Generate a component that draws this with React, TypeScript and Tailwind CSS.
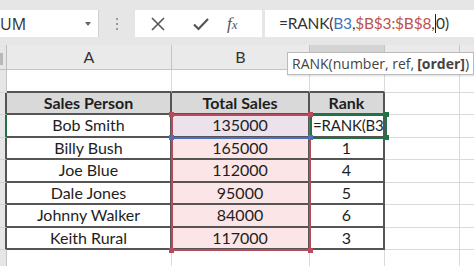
import React from "react";

const data: [string, string, string][] = [
  ["Bob Smith", "135000", ""],
  ["Billy Bush", "165000", "1"],
  ["Joe Blue", "112000", "4"],
  ["Dale Jones", "95000", "5"],
  ["Johnny Walker", "84000", "6"],
  ["Keith Rural", "117000", "3"],
];

const cellFont = { fontFamily: "Lato, 'Open Sans', sans-serif" };

function Sq({ className }: { className: string }) {
  return <div className={"absolute w-[5px] h-[5px] " + className} />;
}

export default function App() {
  const rowsIdx = [1, 2, 3, 4, 5, 6, 7, 8, 9];
  return (
    <div className="w-[474px] h-[266px] overflow-hidden bg-white flex flex-col" style={cellFont}>
      {/* toolbar */}
      <div className="h-[45px] shrink-0 bg-[#e6e6e6] flex items-start pt-[10px]">
        <div className="w-[99px] h-[27px] bg-white border-r border-[#d0d0d0] flex items-center justify-between pr-[7px] overflow-hidden">
          <span className="text-[16px] text-[#333] leading-none" style={{ fontFamily: "'Open Sans', sans-serif" }}>UM</span>
          <div className="w-0 h-0 border-l-[3px] border-r-[3px] border-t-[4px] border-l-transparent border-r-transparent border-t-[#666]" />
        </div>
        <div className="w-[36px] h-[27px] flex flex-col items-center justify-center gap-[3px]">
          <div className="w-[2px] h-[2px] bg-[#9a9a9a]" />
          <div className="w-[2px] h-[2px] bg-[#9a9a9a]" />
          <div className="w-[2px] h-[2px] bg-[#9a9a9a]" />
        </div>
        <div className="w-[127px] h-[27px] bg-white flex items-center">
          <svg width="16" height="16" viewBox="0 0 16 16" className="ml-[15px]">
            <path d="M2 2 L14 14 M14 2 L2 14" stroke="#555" strokeWidth="1.6" fill="none" />
          </svg>
          <svg width="18" height="16" viewBox="0 0 18 16" className="ml-[26px]">
            <path d="M2 8.5 L6.5 13 L16 3" stroke="#555" strokeWidth="2.2" fill="none" />
          </svg>
          <span className="ml-[17px] text-[17px] italic text-[#555] leading-none" style={{ fontFamily: "'Liberation Serif', serif" }}>
            f<span className="text-[13px]">x</span>
          </span>
        </div>
        <div className="w-[3px]" />
        <div className="flex-1 h-[27px] bg-white flex items-center pl-[14px] text-[15.5px] tracking-[-0.2px] leading-none" style={{ fontFamily: "Lato, sans-serif" }}>
          <span className="text-[#333]">=RANK(</span>
          <span className="text-[#3f73b8]">B3</span>
          <span className="text-[#333]">,</span>
          <span className="text-[#c0504d]">$B$3:$B$8</span>
          <span className="text-[#333]">,</span>
          <span className="inline-block w-[1.5px] h-[19px] bg-[#222]" />
          <span className="text-[#333]">0)</span>
        </div>
      </div>

      {/* sheet */}
      <div className="relative flex-1">
        <div className="grid grid-cols-[7px_165px_138px_75px_75px_1fr] grid-rows-[25px_repeat(9,22.5px)]">
          {/* header row */}
          <div className="bg-[#e6e6e6] border-r border-b border-[#bdbdbd] relative">
            <div className="absolute left-0 top-[8px] w-[3px] h-[12px] bg-[#b8b8b8]" />
          </div>
          <div className="bg-[#eaeaea] border-r border-b border-[#c4c4c4] flex items-center justify-center text-[16px] text-[#333]">A</div>
          <div className="bg-[#eaeaea] border-r border-b border-[#c4c4c4] flex items-center justify-center text-[16px] text-[#333]">B</div>
          <div className="bg-[#d4d4d4] border-r border-b border-[#c4c4c4]" />
          <div className="bg-[#eaeaea] border-r border-b border-[#c4c4c4]" />
          <div className="bg-[#eaeaea] border-b border-[#c4c4c4]" />

          {rowsIdx.map((r) => {
            const inTable = r >= 2 && r <= 8;
            const rowHeadBorder =
              r === 3 ? "border-r-2 border-r-[#217346]" : inTable ? "border-r-2 border-r-[#555]" : "border-r border-r-[#c4c4c4]";
            const cells: React.ReactNode[] = [];
            cells.push(<div key={"h" + r} className={"bg-[#e6e6e6] border-b border-b-[#d4d4d4] " + rowHeadBorder} />);
            const tableBottom = r >= 1 && r <= 8;
            const tb = tableBottom ? "border-b-2 border-b-[#555]" : "border-b border-b-[#dadada]";
            const tr = inTable ? "border-r-2 border-r-[#555]" : "border-r border-r-[#dadada]";
            let a = "";
            let b = "";
            let c = "";
            if (r === 2) {
              a = "Sales Person";
              b = "Total Sales";
              c = "Rank";
            } else if (r >= 3 && r <= 8) {
              [a, b, c] = data[r - 3];
            }
            const head = r === 2;
            const base = "flex items-center justify-center text-[16px] text-[#1e1e1e] " + (head ? "font-bold bg-[#d9d9d9] " : "");
            const bBg = r === 3 ? "bg-[#ebe2ec] " : r >= 4 && r <= 8 ? "bg-[#fbe5e6] " : "";
            cells.push(<div key={"a" + r} className={base + tb + " " + tr}>{a}</div>);
            cells.push(<div key={"b" + r} className={base + bBg + tb + " " + tr}>{b}</div>);
            if (r === 3) {
              cells.push(
                <div key={"c" + r} className={"flex items-center text-[15px] tracking-[-0.2px] text-[#1e1e1e] pl-[3px] whitespace-nowrap overflow-hidden " + tb + " " + tr}>
                  =RANK(B3
                </div>
              );
            } else {
              cells.push(<div key={"c" + r} className={base + tb + " " + tr}>{c}</div>);
            }
            cells.push(<div key={"d" + r} className="border-b border-b-[#dadada] border-r border-r-[#dadada]" />);
            cells.push(<div key={"e" + r} className="border-b border-b-[#dadada]" />);
            return cells;
          })}
        </div>

        {/* reference range B3:B8 */}
        <div className="absolute left-[171px] top-[69px] w-[140px] h-[137px] border-2 border-[#b84a5c]" />
        {/* B3 blue reference */}
        <div className="absolute left-[173px] top-[92px] w-[136px] h-[2px] bg-[#4d6fc0]" />
        {/* active cell C3 */}
        <div className="absolute left-[310px] top-[69px] w-[77px] h-[25px] border-2 border-[#217346]" />
        <Sq className="left-[169px] top-[67px] bg-[#b84a5c]" />
        <Sq className="left-[308px] top-[67px] bg-[#b84a5c]" />
        <Sq className="left-[169px] top-[203px] bg-[#b84a5c]" />
        <Sq className="left-[308px] top-[203px] bg-[#b84a5c]" />
        <Sq className="left-[169px] top-[90px] bg-[#4d6fc0]" />
        <Sq className="left-[308px] top-[90px] bg-[#4d6fc0]" />
        <Sq className="left-[384px] top-[67px] bg-[#217346]" />
        <Sq className="left-[384px] top-[90px] bg-[#217346]" />

        {/* tooltip */}
        <div className="absolute left-[287px] top-[7px] w-[187px] h-[23px] bg-white border border-[#bcbcbc] shadow-[1px_1px_2px_rgba(0,0,0,0.15)] flex items-center pl-[4px] text-[14px] text-[#444] whitespace-nowrap" style={{ fontFamily: "'Open Sans', sans-serif" }}>
          RANK(number, ref, <span className="font-bold ml-[3px]">[order]</span>)
        </div>
      </div>
    </div>
  );
}
